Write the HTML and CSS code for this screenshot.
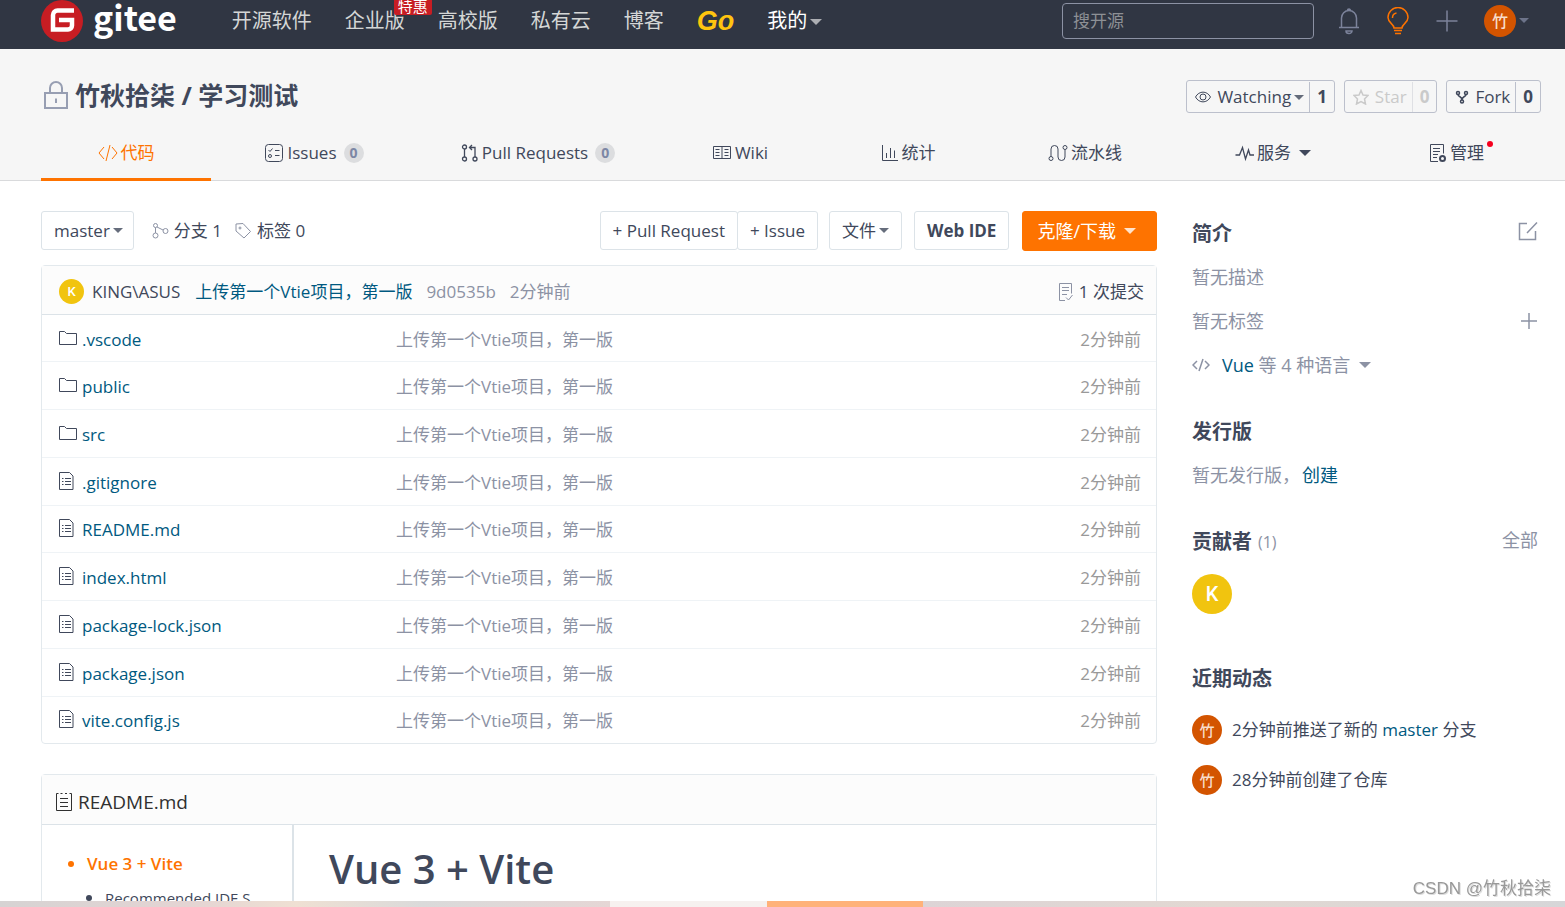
FILE: index.html
```html
<!DOCTYPE html>
<html lang="zh-CN">
<head>
<meta charset="utf-8">
<title>竹秋拾柒/学习测试</title>
<link rel="stylesheet" href="styles.css">
</head>

<body>
<!-- shared icons -->
<svg class="sprite" width="0" height="0">
	<symbol id="folder" viewBox="0 0 20 18"><path d="M1.500 15.500V2.500h5l2 2H18.500v11z"/></symbol>
	<symbol id="file" viewBox="0 0 20 18"><path d="M1.500 .500h10l3.500 3.500v13.500H1.500zM7 6.500h6M7 9.500h6M7 12.500h6M4 6.500h1.500M4 9.500h1.500M4 12.500h1.500"/></symbol>
</svg>

<header class="topbar">
	<a class="logo" href="#">
		<svg width="42" height="42" viewBox="0 0 42 42"><circle cx="21" cy="21" r="21" fill="#c71d23" stroke="none"/><path d="M33 10.500H16.500a4.500 4.500 0 0 0-4.500 4.500V29.500H27a4 4 0 0 0 4-4v-5.500H18" fill="none" stroke="#fff" stroke-width="4.500"/></svg>
		<span>gitee</span>
	</a>
	<nav class="topnav">
		<a href="#">开源软件</a>
		<a href="#" class="ent">企业版<em class="promo">特惠</em></a>
		<a href="#">高校版</a>
		<a href="#">私有云</a>
		<a href="#">博客</a>
		<a href="#" class="go">Go</a>
		<a href="#" class="mine">我的<i class="caret"></i></a>
	</nav>
	<input class="search" type="text" placeholder="搜开源" aria-label="搜开源">
	<div class="tools">
		<button aria-label="通知"><svg width="22" height="28" viewBox="0 0 22 28"><path stroke-width="1.500" d="M1 20.500h20M3.500 20.500V11a7.500 7.500 0 0 1 15 0v9.500M9.500 3.500a1.500 1.500 0 0 1 3 0M8 24h6a3 2.500 0 0 1-6 0z"/></svg></button>
		<button class="bulb" aria-label="提示"><svg width="24" height="28" viewBox="0 0 24 28"><path d="M8 21c0-4-6-5-6-10.500a10 10 0 0 1 20 0C22 16 16 17 16 21zM6.500 11a5 5 0 0 1 4-5M8 23.500h8M9 26.500h6" stroke-width="1.500"/></svg></button>
		<button aria-label="新建"><svg width="22" height="22" viewBox="0 0 22 22"><path d="M11 .500v21M.500 11h21" stroke-width="1.500"/></svg></button>
		<button class="me"><span class="avatar a32">竹</span><i class="caret"></i></button>
	</div>
</header>

<div class="repohead">
	<div class="titlerow">
		<h1>
			<svg width="26" height="30" viewBox="0 0 26 30"><path d="M2 13h22v15H2zM7 13V8a6 6 0 0 1 12 0v5M13 18.500v4.500"/></svg>
			<span><a href="#">竹秋拾柒</a> / <a href="#">学习测试</a></span>
		</h1>
		<div class="social">
			<button>
				<svg width="16" height="14" viewBox="0 0 16 14"><path d="M.500 7C4 .500 12 .500 15.500 7 12 13.500 4 13.500 .500 7z"/><circle cx="8" cy="7" r="3"/></svg>
				<span>Watching<i class="caret"></i></span><b>1</b>
			</button>
			<button class="off" disabled>
				<svg width="16" height="16" viewBox="0 0 16 16"><path stroke-width="1.500" d="M8 1.500l2 4.500 5 .500-3.500 3.500 1 5L8 12.500 3.500 15l1-5L1 6.500 6 6z"/></svg>
				<span>Star</span><b>0</b>
			</button>
			<button>
				<svg width="14" height="14" viewBox="0 0 14 14" stroke-width="1.500"><circle cx="3" cy="3" r="1.500"/><circle cx="11" cy="3" r="1.500"/><circle cx="7" cy="11.500" r="1.500"/><path d="M3 4.500C3 7 7 6 7 10M11 4.500C11 7 7 6 7 10"/></svg>
				<span>Fork</span><b>0</b>
			</button>
		</div>
	</div>
	<nav class="tabs">
		<a href="#" class="active"><svg width="20" height="18" viewBox="0 0 20 18"><path d="M6 3L1 9l5 6M14 3l5 6-5 6M12 1L8 17"/></svg>代码</a>
		<a href="#"><svg width="20" height="20" viewBox="0 0 20 20"><rect x="1.500" y="1.500" width="17" height="17" rx="3"/><path d="M4.500 7l1.500 1.500L8.500 5.500M11 7.500h4.500M11 12.500h4.500"/><circle cx="6" cy="13" r="1.500"/></svg>Issues <span class="count">0</span></a>
		<a href="#"><svg width="18" height="18" viewBox="0 0 18 18" stroke-width="1.300"><circle cx="3.500" cy="3" r="2"/><circle cx="3.500" cy="15" r="2"/><circle cx="14" cy="15" r="2"/><path d="M3.500 5v8M14 13V3.500H9M11 1L8.500 3.500 11 6"/></svg>Pull Requests <span class="count">0</span></a>
		<a href="#"><svg width="20" height="18" viewBox="0 0 20 18"><path d="M1.500 2.500h17v12h-17zM10 2.500v12M3.500 5.500h4M3.500 8.500h4M3.500 11.500h4M12.500 5.500h4M12.500 8.500h4M12.500 11.500h4"/></svg>Wiki</a>
		<a href="#"><svg width="18" height="18" viewBox="0 0 18 18"><path d="M1.500 1v15.500H17M5.500 14V9M9.500 14V4M13.500 14V6.500"/></svg>统计</a>
		<a href="#"><svg width="20" height="18" viewBox="0 0 20 18"><circle cx="3" cy="14.500" r="2"/><circle cx="17" cy="3.500" r="2"/><path d="M3 12.500V5a3.500 3.500 0 0 1 7 0v8a3.500 3.500 0 0 0 7 0V5.500"/></svg>流水线</a>
		<a href="#"><svg width="19" height="18" viewBox="0 0 19 18"><path stroke-width="1.300" d="M.500 11h4L7.500 3.500l3 11.500 3-9 1.500 5h4"/></svg>服务 <i class="caret"></i></a>
		<a href="#"><svg width="19" height="20" viewBox="0 0 19 20"><path d="M10 18.500H2.500V1.500h13v9M5 5.500h7M5 8.500h7M5 11.500h5M5 14.500h4"/><circle cx="14.500" cy="15.500" r="2.500" stroke-width="2"/></svg><span class="dot">管理</span></a>
	</nav>
</div>

<main class="page">
	<section class="code">
		<div class="toolbar">
			<button class="btn branch">master<i class="caret"></i></button>
			<a class="ref first" href="#"><svg width="17" height="18" viewBox="0 0 17 18"><circle cx="3.500" cy="3.500" r="2"/><circle cx="3.500" cy="13.500" r="2.500"/><circle cx="13.500" cy="9" r="2.500"/><path d="M3.500 5.500v5.500M5 5l6 3"/></svg>分支 1</a>
			<a class="ref" href="#"><svg width="18" height="18" viewBox="0 0 18 18"><path d="M2 2l7-.500 7.500 8-6.500 6.500L2 9z"/><circle cx="6" cy="6" r="1"/></svg>标签 0</a>
			<div class="group">
				<button class="btn">+ Pull Request</button><button class="btn">+ Issue</button>
			</div>
			<button class="btn files">文件<i class="caret"></i></button>
			<button class="btn ide">Web IDE</button>
			<button class="btn clone">克隆/下载<i class="caret"></i></button>
		</div>

		<div class="box">
			<div class="commit">
				<span class="avatar a25 k">K</span>
				<a class="author" href="#">KING\ASUS</a>
				<a class="msg" href="#">上传第一个Vtie项目，第一版</a>
				<span class="sha">9d0535b</span>
				<span>2分钟前</span>
				<a class="total" href="#"><svg width="18" height="20" viewBox="0 0 18 20"><path d="M8 18.500H2.500V1.500h12v10M5 5.500h7M5 8.500h7M5 12.500h5M9 15.500l2.500 2.500 4-5"/></svg>1 次提交</a>
			</div>
			<table class="files-table">
				<tr><td class="name"><svg><use href="#folder"/></svg><a href="#">.vscode</a></td><td>上传第一个Vtie项目，第一版</td><td class="age">2分钟前</td></tr>
				<tr><td class="name"><svg><use href="#folder"/></svg><a href="#">public</a></td><td>上传第一个Vtie项目，第一版</td><td class="age">2分钟前</td></tr>
				<tr><td class="name"><svg><use href="#folder"/></svg><a href="#">src</a></td><td>上传第一个Vtie项目，第一版</td><td class="age">2分钟前</td></tr>
				<tr><td class="name"><svg><use href="#file"/></svg><a href="#">.gitignore</a></td><td>上传第一个Vtie项目，第一版</td><td class="age">2分钟前</td></tr>
				<tr><td class="name"><svg><use href="#file"/></svg><a href="#">README.md</a></td><td>上传第一个Vtie项目，第一版</td><td class="age">2分钟前</td></tr>
				<tr><td class="name"><svg><use href="#file"/></svg><a href="#">index.html</a></td><td>上传第一个Vtie项目，第一版</td><td class="age">2分钟前</td></tr>
				<tr><td class="name"><svg><use href="#file"/></svg><a href="#">package-lock.json</a></td><td>上传第一个Vtie项目，第一版</td><td class="age">2分钟前</td></tr>
				<tr><td class="name"><svg><use href="#file"/></svg><a href="#">package.json</a></td><td>上传第一个Vtie项目，第一版</td><td class="age">2分钟前</td></tr>
				<tr><td class="name"><svg><use href="#file"/></svg><a href="#">vite.config.js</a></td><td>上传第一个Vtie项目，第一版</td><td class="age">2分钟前</td></tr>
			</table>
		</div>

		<div class="box readme">
			<div class="readme-title"><svg width="18" height="20" viewBox="0 0 18 20"><path d="M3.500 1.500h-2v17h15v-17h-2M5.500 1.500h2M10 1.500h2M5 6.500h8M5 10.500h8M5 14.500h8"/></svg>README.md</div>
			<div class="readme-body">
				<ul class="toc">
					<li><a href="#">Vue 3 + Vite</a>
						<ul><li><a href="#">Recommended IDE S</a></li></ul>
					</li>
				</ul>
				<article><h1>Vue 3 + Vite</h1></article>
			</div>
		</div>
	</section>

	<aside class="side">
		<section>
			<h2>简介<button class="end" aria-label="编辑"><svg width="20" height="20" viewBox="0 0 20 20"><path stroke-width="1.500" d="M9 1.500H1.500v16h16V9M9 11L19 .500"/></svg></button></h2>
			<p>暂无描述</p>
			<p>暂无标签<button class="end" aria-label="添加标签"><svg width="18" height="18" viewBox="0 0 18 18"><path d="M9 1v16M1 9h16" stroke-width="1.500"/></svg></button></p>
			<p><svg class="lang" width="18" height="14" viewBox="0 0 18 14"><path d="M5 3L1 7l4 4M13 3l4 4-4 4M11 1L7 13" stroke-width="1.500"/></svg><a href="#">Vue</a>&nbsp;等 4 种语言<i class="caret"></i></p>
		</section>
		<section>
			<h2>发行版</h2>
			<p>暂无发行版，<a class="create" href="#">创建</a></p>
		</section>
		<section>
			<h2>贡献者 <small>(1)</small><a class="end all" href="#">全部</a></h2>
			<div class="people"><a class="avatar a40 k" href="#">K</a></div>
		</section>
		<section>
			<h2>近期动态</h2>
			<ul class="feed">
				<li><span class="avatar a30">竹</span><span>2分钟前推送了新的 <a href="#">master</a> 分支</span></li>
				<li><span class="avatar a30">竹</span><span>28分钟前创建了仓库</span></li>
			</ul>
		</section>
	</aside>
</main>

<div class="strip"></div>
<div class="mark">CSDN @竹秋拾柒</div>
</body>
</html>
```
FILE: styles.css
```css
* {
	box-sizing: border-box;
}
body {
	margin: 0;
	height: 100vh;
	overflow: hidden;
	display: flex;
	flex-direction: column;
	font: 17px/24px "Open Sans", "Noto Sans CJK SC", sans-serif;
	color: #40485b;
	background: #fff;
}
a {
	color: #005980;
	text-decoration: none;
}
button {
	display: flex;
	align-items: center;
	padding: 0;
	border: 0;
	background: none;
	font: inherit;
	color: inherit;
}
h1, h2, p, ul {
	margin: 0;
	padding: 0;
}
svg {
	flex: none;
	fill: none;
	stroke: currentColor;
}
.sprite {
	position: absolute;
}
.caret {
	display: inline-block;
	flex: none;
	border: 5px solid transparent;
	border-top-color: currentColor;
	border-bottom: 0;
	margin-left: 3px;
	vertical-align: middle;
	opacity: .8;
}
.avatar {
	display: flex;
	flex: none;
	align-items: center;
	justify-content: center;
	border-radius: 50%;
	background: #d35400;
	color: #f8ddca;
	font-weight: 500;
}
.a25 { width: 25px; height: 25px; font-size: 13px; }
.a30 { width: 30px; height: 30px; font-size: 15px; }
.a32 { width: 32px; height: 32px; font-size: 16px; }
.a40 { width: 40px; height: 40px; font-size: 20px; }
.k {
	background: #f1c40f;
	color: #fff;
	font-family: Roboto, sans-serif;
}

/* top bar */
.topbar {
	flex: none;
	display: flex;
	align-items: center;
	height: 49px;
	padding: 0 36px 8px 41px;
	background: #303643;
}
.logo {
	display: flex;
	align-items: center;
	gap: 10px;
	color: #fff;
	font: bold 34px/34px "Noto Sans CJK SC", sans-serif;
}
.logo span {
	margin-bottom: 8px;
}
.topnav {
	display: flex;
	gap: 33px;
	margin-left: 55px;
	font-size: 20px;
}
.topnav a {
	color: #d4d6d6;
	white-space: nowrap;
}
.topnav .go {
	color: #ffc40f;
	font: italic bold 27px/24px "Liberation Sans", sans-serif;
}
.topnav .mine {
	color: #fff;
}
.topnav .caret {
	border-width: 6px 6px 0;
	opacity: .6;
}
.ent {
	position: relative;
}
.promo {
	position: absolute;
	left: 49px;
	top: -12px;
	padding: 0 4px;
	border-radius: 2px;
	background: #c71d23;
	color: #fff;
	font: 15px/18px "Noto Sans CJK SC", sans-serif;
}
.search {
	width: 252px;
	height: 36px;
	margin-left: auto;
	padding: 0 10px;
	border: 1px solid #8c92a4;
	border-radius: 4px;
	background: none;
	font: inherit;
	color: #fff;
}
.search::placeholder {
	color: #8d9095;
}
.tools {
	display: flex;
	align-items: center;
	gap: 26px;
	margin-left: 24px;
	color: #7c839b;
}
.bulb {
	color: #fe7300;
}

/* repo header */
.repohead {
	flex: none;
	padding: 31px 24px 0 41px;
	border-bottom: 1px solid #d9dadc;
	background: #f6f6f6;
}
.repohead a {
	color: inherit;
}
.titlerow {
	display: flex;
	justify-content: space-between;
	height: 33px;
	margin-bottom: 14px;
}
.titlerow h1 {
	display: flex;
	align-items: center;
	gap: 6px;
	height: 30px;
	padding-left: 2px;
	font-size: 25px;
	line-height: 30px;
}
.titlerow h1 svg {
	color: #979eb2;
	stroke-width: 2;
}
.social {
	display: flex;
	gap: 9px;
}
.social button {
	border: 1px solid #bcc0cc;
	border-radius: 3px;
}
.social svg {
	margin: 0 6px 0 8px;
}
.social span {
	padding-right: 5px;
}
.social b {
	padding: 3px 7px;
	border-left: 1px solid #bcc0cc;
}
.social .off {
	color: #cacaca;
}
.social .off b {
	border-color: #dfe0e4;
}
.tabs {
	display: grid;
	grid-template-columns: 170fr 206fr 242fr 162fr 174fr 180fr 196fr 170fr;
	margin-bottom: -1px;
}
.tabs a {
	display: flex;
	align-items: center;
	justify-content: center;
	gap: 3px;
	height: 54px;
	border-bottom: 3px solid transparent;
	white-space: nowrap;
}
.tabs .active {
	color: #fe7300;
	border-color: #fe7300;
}
.count {
	min-width: 20px;
	margin-left: 4px;
	border-radius: 10px;
	background: #dcdddf;
	color: #7c87a5;
	font-size: 14px;
	font-weight: bold;
	line-height: 20px;
	text-align: center;
}
.tabs .caret {
	margin-left: 5px;
	border-width: 6px 6px 0;
	opacity: 1;
}
.dot {
	position: relative;
}
.dot::after {
	content: "";
	position: absolute;
	top: 0;
	right: -9px;
	width: 6px;
	height: 6px;
	border-radius: 50%;
	background: #f5001e;
}

/* columns */
.page {
	flex: 1;
	min-height: 0;
	overflow: hidden;
	display: grid;
	grid-template-columns: minmax(0, 1fr) 346px;
	gap: 35px;
	padding: 30px 27px 0 41px;
}
.toolbar {
	display: flex;
	align-items: flex-start;
	height: 40px;
	margin-bottom: 14px;
}
.btn {
	height: 39px;
	padding: 0 12px;
	border: 1px solid #dce3e8;
	border-radius: 3px;
	background: #fff;
	white-space: nowrap;
}
.branch {
	padding-right: 10px;
}
.ref {
	display: flex;
	align-items: center;
	gap: 5px;
	height: 39px;
	margin-left: 12px;
	color: #40485b;
}
.ref.first {
	margin-left: 18px;
}
.ref svg {
	color: #8c92a4;
}
.group {
	display: flex;
	margin-left: auto;
}
.group .btn + .btn {
	margin-left: -1px;
}
.files {
	margin-left: 11px;
}
.ide {
	margin: 0 13px 0 12px;
	font-weight: bold;
}
.clone {
	height: 40px;
	padding: 0 20px 0 14px;
	border-color: #fe7300;
	background: #fe7300;
	color: #fff;
	font-size: 18px;
}
.clone .caret {
	margin-left: 8px;
	border-width: 6px 6px 0;
}
.box {
	border: 1px solid #e3e9ed;
	border-radius: 4px;
}
.commit {
	display: flex;
	align-items: center;
	height: 49px;
	padding: 3px 12px 0 17px;
	border-bottom: 1px solid #dce3e8;
	background: #fcfcfc;
	color: #8c92a4;
}
.author {
	margin: 0 15px 0 8px;
	color: #40485b;
}
.sha {
	margin: 0 14px;
}
.total {
	display: flex;
	align-items: center;
	gap: 4px;
	margin-left: auto;
	color: #40485b;
}
.total svg {
	color: #8c92a4;
}
.files-table {
	width: 100%;
	height: 428px;
	border-collapse: collapse;
	color: #8c92a4;
}
.files-table td {
	padding: 3px 0 0;
	border-bottom: 1px solid #eff3f6;
}
.files-table tr:last-child td {
	border: 0;
}
.files-table .name {
	width: 354px;
	padding-left: 16px;
}
.files-table svg {
	width: 20px;
	height: 18px;
	margin-right: 4px;
	vertical-align: -1px;
	color: #40485b;
}
.files-table .age {
	padding-right: 15px;
	text-align: right;
	color: #999;
}
.readme {
	margin-top: 30px;
}
.readme-title {
	display: flex;
	align-items: center;
	gap: 5px;
	height: 50px;
	padding: 4px 13px 0;
	border-bottom: 1px solid #dce3e8;
	background: #fcfcfc;
	color: #303030;
	font-size: 19px;
}
.readme-body {
	display: flex;
}
.toc {
	flex: none;
	width: 252px;
	padding: 27px 12px 60px 45px;
	border-right: 2px solid #dce3e8;
	color: #fe7300;
}
.toc a {
	color: inherit;
	font-weight: 600;
}
.toc ul {
	margin-top: 10px;
	padding-left: 18px;
	list-style: disc;
	color: #40485b;
}
.toc ul a {
	font-weight: normal;
	font-size: 15px;
}
.readme article {
	padding: 16px 35px;
}
.readme h1 {
	font-size: 40px;
	font-weight: 600;
	line-height: 56px;
}

/* sidebar */
.side {
	padding-top: 8px;
	color: #8c92a4;
}
.side section {
	margin-bottom: 30px;
}
.side h2 {
	display: flex;
	align-items: center;
	height: 30px;
	margin-bottom: 6px;
	color: #40485b;
	font-size: 20px;
	line-height: 30px;
}
.side p {
	display: flex;
	align-items: center;
	height: 44px;
	font-size: 18px;
}
.side small {
	margin-left: 6px;
	color: #8c92a4;
	font-size: 16px;
	font-weight: normal;
}
.end {
	margin-left: auto;
	color: #8c92a4;
}
.side h2 .end {
	margin-bottom: 4px;
}
.all {
	font-size: 18px;
	font-weight: normal;
}
.lang {
	margin-right: 12px;
}
.side .caret {
	border-width: 6px 6px 0;
	margin-left: 9px;
	opacity: 1;
}
.create {
	margin-left: 2px;
}
.people {
	padding: 11px 0 20px;
}
.feed {
	padding-top: 5px;
	list-style: none;
	color: #40485b;
}
.feed li {
	display: flex;
	align-items: center;
	gap: 10px;
	height: 50px;
}

.strip {
	flex: none;
	height: 6px;
	background: linear-gradient(90deg, #d6d3d3, #e4d4d3 12%, #efe0d3 19%, #dadada 27%, #e5d6d5 39%, #f7f1ef 39%, #f5f1ef 49%, #ffb27a 49%, #ffb27a 59%, #ddd4d6 59%, #e2d8d2 78%, #d6d6d8);
}
.mark {
	position: fixed;
	right: 14px;
	bottom: 6px;
	color: #999;
	font-family: "Liberation Sans", "Noto Sans CJK SC", sans-serif;
	text-shadow: 1px 1px 0 #ddd;
}
```
